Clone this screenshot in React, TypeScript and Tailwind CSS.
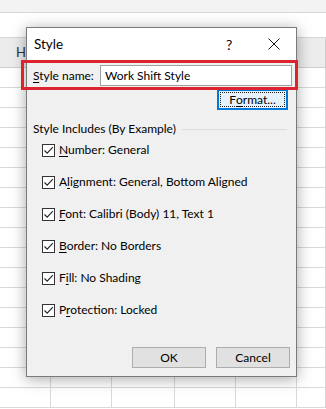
import React from "react";

const font = { fontFamily: 'Lato, "Noto Sans", sans-serif' };

function Check() {
  return (
    <span className="w-[13px] h-[13px] border border-[#333333] bg-white flex items-center justify-center shrink-0">
      <svg width="11" height="11" viewBox="0 0 11 11">
        <path d="M1.5 5.5 L4.2 8.2 L9.8 2.2" fill="none" stroke="#222222" strokeWidth="1.1" />
      </svg>
    </span>
  );
}

function Row({ pre, u, post }: { pre: string; u: string; post: string }) {
  return (
    <div className="h-[32px] flex items-center gap-[4px] pl-[15px]">
      <Check />
      <span className="text-[12px] text-black leading-none whitespace-nowrap">
        {pre}
        <span className="underline underline-offset-2">{u}</span>
        {post}
      </span>
    </div>
  );
}

export default function App() {
  const cols = [53, 64, 65, 64, 64, 30];
  const rows = Array.from({ length: 17 });
  return (
    <div className="relative w-[326px] h-[409px] overflow-hidden bg-white" style={font}>
      {/* spreadsheet background */}
      <div className="flex flex-col w-full">
        <div className="h-[13px] bg-[#f3f3f3] border-b border-[#d6d6d6]" />
        <div className="h-[25px] bg-white border-b border-[#d6d6d6]" />
        <div className="h-[30px] bg-[#ececec] border-b border-[#d0d0d0] flex">
          {cols.map((w, i) => (
            <div key={i} className="h-full border-r border-[#d0d0d0] flex items-start justify-start text-[13px] text-[#333]" style={{ width: w }}>
              {i === 0 ? <span className="pl-[16px] pt-[5px]">H</span> : null}
            </div>
          ))}
        </div>
        {rows.map((_, r) => (
          <div key={r} className="h-[20px] border-b border-[#d9d9d9] flex">
            {cols.map((w, i) => (
              <div key={i} className="h-full border-r border-[#d9d9d9]" style={{ width: w }} />
            ))}
          </div>
        ))}
      </div>

      {/* dialog */}
      <div className="absolute left-[26px] top-[27px] w-[271px] h-[350px] bg-[#f0f0f0] border border-[#7a7a7a] shadow-[0_2px_14px_rgba(0,0,0,0.35)] flex flex-col">
        <div className="h-[32px] bg-white flex items-center relative">
          <span className="pl-[7px] text-[13.5px] text-black">Style</span>
          <span className="absolute left-[199px] top-[6px] text-[14px] text-black">?</span>
          <svg className="absolute left-[241px] top-[10px]" width="12" height="12" viewBox="0 0 12 12">
            <path d="M0.5 0.5 L11.5 11.5 M11.5 0.5 L0.5 11.5" stroke="#111" strokeWidth="1" />
          </svg>
        </div>
        <div className="h-[5px]" />
        <div className="h-[21px] flex items-center pl-[6px]">
          <span className="w-[67px] text-[12px] text-black whitespace-nowrap">
            <span className="underline underline-offset-2">S</span>tyle name:
          </span>
          <div className="w-[192px] h-[21px] bg-white border border-[#a0a0a0] flex items-center pl-[4px] text-[12px] text-black">
            Work Shift Style
          </div>
        </div>
        <div className="h-[3px]" />
        <div className="flex justify-end pr-[8px]">
          <div className="w-[71px] h-[21px] border-2 border-[#0078d7] bg-[#e5f1fb] p-[1px]">
            <div className="w-full h-full border border-dotted border-[#222] flex items-center justify-center text-[12px] text-black leading-none">
              F<span className="underline underline-offset-2">o</span>rmat...
            </div>
          </div>
        </div>
        <div className="h-[14px]" />
        <div className="h-[10px] flex items-center pl-[6px] pr-[9px] gap-[6px]">
          <span className="text-[12px] text-black whitespace-nowrap leading-none">Style Includes (By Example)</span>
          <div className="flex-1 h-px bg-[#dcdcdc]" />
        </div>
        <div className="flex flex-col">
          <Row pre="" u="N" post="umber: General" />
          <Row pre="A" u="l" post="ignment: General, Bottom Aligned" />
          <Row pre="" u="F" post="ont: Calibri (Body) 11, Text 1" />
          <Row pre="" u="B" post="order: No Borders" />
          <Row pre="F" u="i" post="ll: No Shading" />
          <Row pre="P" u="r" post="otection: Locked" />
        </div>
        <div className="flex-1" />
        <div className="flex justify-end gap-[10px] pr-[6px] pb-[8px]">
          <div className="w-[74px] h-[21px] bg-[#e1e1e1] border border-[#adadad] flex items-center justify-center text-[12px] text-black">OK</div>
          <div className="w-[74px] h-[21px] bg-[#e1e1e1] border border-[#adadad] flex items-center justify-center text-[12px] text-black">Cancel</div>
        </div>
      </div>

      {/* red annotation box */}
      <div className="absolute left-[21px] top-[60px] w-[277px] h-[30px] border-[3px] border-[#dc2430]" />
    </div>
  );
}
